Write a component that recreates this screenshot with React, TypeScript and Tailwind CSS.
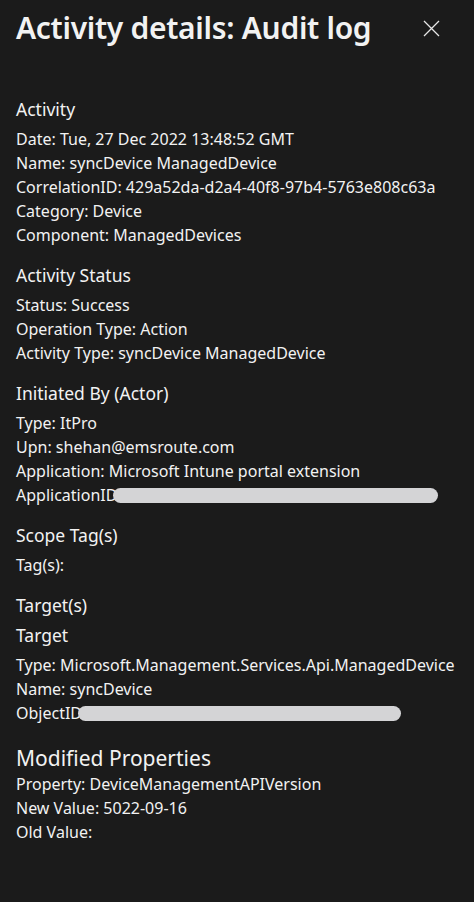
import type { FC } from "react";

interface Section {
    heading: string;
    rows: { text: string; redacted?: string }[];
    sub?: Section;
}

const sections: Section[] = [
    {
        heading: "Activity",
        rows: [
            { text: "Date: Tue, 27 Dec 2022 13:48:52 GMT" },
            { text: "Name: syncDevice ManagedDevice" },
            { text: "CorrelationID: 429a52da-d2a4-40f8-97b4-5763e808c63a" },
            { text: "Category: Device" },
            { text: "Component: ManagedDevices" },
        ],
    },
    {
        heading: "Activity Status",
        rows: [
            { text: "Status: Success" },
            { text: "Operation Type: Action" },
            { text: "Activity Type: syncDevice ManagedDevice" },
        ],
    },
    {
        heading: "Initiated By (Actor)",
        rows: [
            { text: "Type: ItPro" },
            { text: "Upn: shehan@emsroute.com" },
            { text: "Application: Microsoft Intune portal extension" },
            { text: "ApplicationID", redacted: "w-[325px]" },
        ],
    },
    {
        heading: "Scope Tag(s)",
        rows: [{ text: "Tag(s):" }],
    },
    {
        heading: "Target(s)",
        rows: [],
        sub: {
            heading: "Target",
            rows: [
                { text: "Type: Microsoft.Management.Services.Api.ManagedDevice" },
                { text: "Name: syncDevice" },
                { text: "ObjectID", redacted: "w-[323px]" },
            ],
        },
    },
];

const Rows: FC<{ rows: Section["rows"] }> = ({ rows }) => (
    <div className="flex flex-col">
        {rows.map((row) => (
            <div key={row.text} className="flex items-center h-[24px] text-[16px] leading-[24px] whitespace-nowrap">
                <span>{row.text}</span>
                {row.redacted && (
                    <span className={`${row.redacted} h-[15px] rounded-full bg-[#d4d4d6] -ml-[4px]`}></span>
                )}
            </div>
        ))}
    </div>
);

const App: FC = () => {
    return (
        <div
            className="w-[474px] h-[902px] bg-[#1b1b1b] text-[#f2f2f2] px-4 overflow-hidden"
            style={{ fontFamily: '"Segoe UI", "Noto Sans", sans-serif' }}
        >
            <div className="flex items-center justify-between pt-[7px] h-[49px]">
                <h1 className="text-[30px] leading-[40px] font-semibold tracking-[-0.3px]">
                    Activity details: Audit log
                </h1>
                <button className="mr-[18px] text-[#e6e6e6]">
                    <svg width="17" height="17" viewBox="0 0 17 17" fill="none" stroke="currentColor" strokeWidth="1.3">
                        <path d="M1 1L16 16M16 1L1 16" />
                    </svg>
                </button>
            </div>

            <div className="flex flex-col gap-[16px] mt-[48px]">
                {sections.map((section) => (
                    <div key={section.heading} className="flex flex-col">
                        <h2 className="text-[17.5px] leading-[24px] mb-[6px]">{section.heading}</h2>
                        <Rows rows={section.rows} />
                        {section.sub && (
                            <div className="flex flex-col">
                                <h3 className="text-[17.5px] leading-[24px] mb-[6px]">{section.sub.heading}</h3>
                                <Rows rows={section.sub.rows} />
                            </div>
                        )}
                    </div>
                ))}
                <div className="flex flex-col mt-[3px]">
                    <h2 className="text-[21px] leading-[28px]">Modified Properties</h2>
                    <Rows
                        rows={[
                            { text: "Property: DeviceManagementAPIVersion" },
                            { text: "New Value: 5022-09-16" },
                            { text: "Old Value:" },
                        ]}
                    />
                </div>
            </div>
        </div>
    );
};

export default App;
